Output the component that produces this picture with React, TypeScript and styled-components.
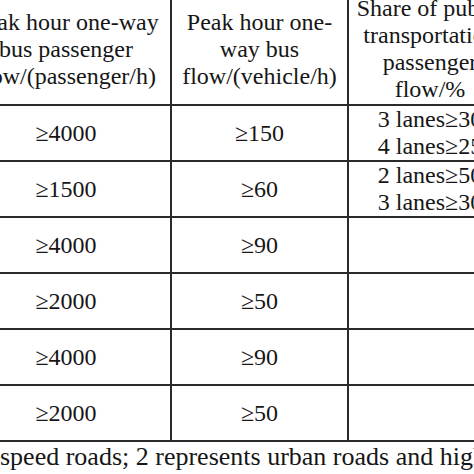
import React from 'react';
import styled, { createGlobalStyle } from 'styled-components';

const GlobalStyle = createGlobalStyle`
  html, body {
    margin: 0;
    padding: 0;
    background: #ffffff;
  }
`;

const Page = styled.div`
  width: 474px;
  height: 474px;
  overflow: hidden;
  background: #ffffff;
  font-family: 'Liberation Serif', 'Times New Roman', serif;
  color: #161616;
`;

const Table = styled.div`
  display: grid;
  grid-template-columns: 210px 177px 164px;
  grid-template-rows: 112px repeat(6, 56px);
  width: max-content;
  margin: -8px 0 0 -40px;
  border-left: 2px solid #2a2a2a;
  border-top: 2px solid #2a2a2a;
`;

const Cell = styled.div`
  display: flex;
  flex-direction: column;
  align-items: center;
  justify-content: center;
  padding: 0 4px;
  border-right: 2px solid #2a2a2a;
  border-bottom: 2px solid #2a2a2a;
  font-size: 24px;
  line-height: 27px;
  text-align: center;
  white-space: nowrap;
`;

const Caption = styled.p`
  margin: 0;
  font-size: 26px;
  line-height: 30px;
  white-space: nowrap;
`;

const header = [
  ['Peak hour one-way', 'bus passenger', 'flow/(passenger/h)'],
  ['Peak hour one-', 'way bus', 'flow/(vehicle/h)'],
  ['Share of public', 'transportation', 'passenger', 'flow/%'],
];

const rows: [string, string, string[]][] = [
  ['≥4000', '≥150', ['3 lanes≥30', '4 lanes≥25']],
  ['≥1500', '≥60', ['2 lanes≥50', '3 lanes≥30']],
  ['≥4000', '≥90', []],
  ['≥2000', '≥50', []],
  ['≥4000', '≥90', []],
  ['≥2000', '≥50', []],
];

export default function App() {
  return (
    <Page>
      <GlobalStyle />
      <Table>
        {header.map((lines, i) => (
          <Cell key={`h${i}`}>
            {lines.map(l => (
              <span key={l}>{l}</span>
            ))}
          </Cell>
        ))}
        {rows.map(([pass, veh, share], r) => (
          <React.Fragment key={r}>
            <Cell>{pass}</Cell>
            <Cell>{veh}</Cell>
            <Cell>
              {share.map(s => (
                <span key={s}>{s}</span>
              ))}
            </Cell>
          </React.Fragment>
        ))}
      </Table>
      <Caption>speed roads; 2 represents urban roads and highways</Caption>
    </Page>
  );
}
